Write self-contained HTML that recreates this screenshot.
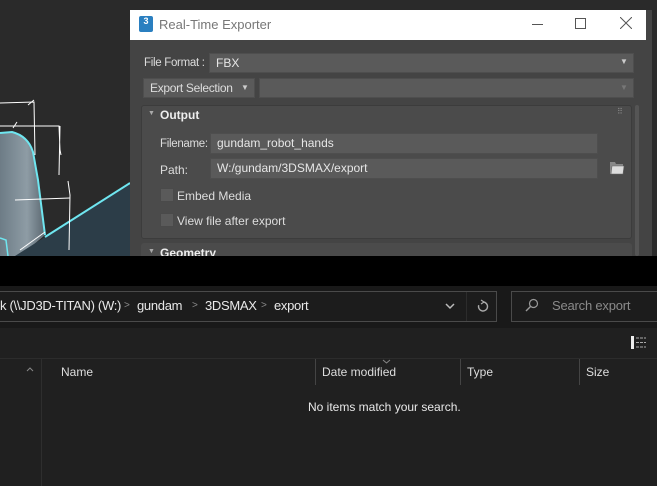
<!DOCTYPE html>
<html><head><meta charset="utf-8"><style>
*{margin:0;padding:0;box-sizing:border-box}
body{width:657px;height:486px;overflow:hidden;background:#191919;font-family:"Liberation Sans",sans-serif;position:relative}
.a{position:absolute}
.t{font-size:12px;color:#ddd;white-space:nowrap}
.inp{background:#5a5a5a;border:1px solid #4e4e4e;color:#e6e6e6;font-size:12px;padding-left:6px;line-height:18px}
.cb{width:14px;height:14px;background:#5a5a5a;border:1px solid #4a4a4a}
.bc{font-size:13px;color:#e8e8e8;top:298px;letter-spacing:-0.3px}
.sep{font-size:10px;color:#888;top:300px}
</style></head><body>
<div class="a" style="left:0;top:0;width:657px;height:256px;background:#2a2a2a"></div>
<svg class="a" style="left:0;top:0" width="135" height="256">
<defs><linearGradient id="g" x1="0" x2="1"><stop offset="0" stop-color="#6d7c86"/><stop offset=".6" stop-color="#8e9ca5"/><stop offset="1" stop-color="#5a6770"/></linearGradient></defs>
<path d="M0 133 L12 132 Q28 136 33 152 L38 180 L45 235 L20 256 L0 256Z" fill="url(#g)"/>
<path d="M45 237 L130 183 L130 256 L15 256Z" fill="#2c3d48"/>
<path d="M0 133 L12 132 Q28 136 33 152 L38 180 L45 235" stroke="#6fe6f0" stroke-width="2" fill="none"/>
<path d="M45 237 L130 183" stroke="#6fe6f0" stroke-width="2"/>
<path d="M0 238 L6 240 L8 256" stroke="#6fe6f0" stroke-width="1.5" fill="none"/>
<g stroke="#fff" stroke-width="1" fill="none">
<path d="M0 103 L34 102 L35 155"/><path d="M28 105 L34 100"/><path d="M13 128 L17 122"/>
<path d="M0 126 L59 126 L60 150 L61 155 M60 126 L59 175"/>
<path d="M68 181 L70 195 L69 250"/><path d="M15 200 L70 198"/><path d="M20 250 L45 232"/>
</g></svg>
<div class="a" style="left:130px;top:10px;width:522px;height:246px;background:#444"></div>
<div class="a" style="left:130px;top:10px;width:516px;height:30px;background:#fff"></div>
<div class="a" style="left:139px;top:16px;width:14px;height:16px;background:#2a7fc0;border-radius:2px;color:#fff;font-size:9px;font-weight:bold;text-align:center;line-height:11px">3</div>
<div class="a t" style="left:159px;top:17px;color:#777;font-size:13px">Real-Time Exporter</div>
<div class="a" style="left:532px;top:24px;width:11px;height:1px;background:#555"></div>
<div class="a" style="left:575px;top:18px;width:11px;height:11px;border:1px solid #555"></div>
<svg class="a" style="left:620px;top:17px" width="12" height="12"><path d="M0 0L12 12M12 0L0 12" stroke="#555"/></svg>
<div class="a t" style="left:144px;top:57px;font-size:11.5px;letter-spacing:-0.3px;z-index:2">File Format :</div>
<div class="a inp" style="left:209px;top:53px;width:425px;height:20px">FBX</div>
<div class="a t" style="left:620px;top:57px;font-size:8px;color:#ccc">▼</div>
<div class="a inp" style="left:143px;top:78px;width:112px;height:20px;color:#ddd;letter-spacing:-0.3px">Export Selection</div>
<div class="a t" style="left:241px;top:83px;font-size:8px;color:#ccc">▼</div>
<div class="a inp" style="left:259px;top:78px;width:375px;height:20px"></div>
<div class="a t" style="left:620px;top:83px;font-size:8px;color:#777">▼</div>
<div class="a" style="left:141px;top:105px;width:491px;height:134px;background:#4b4b4b;border:1px solid #3c3c3c;border-radius:3px"></div>
<div class="a t" style="left:148px;top:110px;font-size:7px;color:#aaa">▼</div>
<div class="a t" style="left:160px;top:108px;font-weight:bold;font-size:12px;color:#eee">Output</div>
<div class="a t" style="left:617px;top:107px;font-size:8px;color:#888">⠿</div>
<div class="a t" style="left:160px;top:138px;font-size:11.5px;letter-spacing:-0.3px;z-index:2">Filename:</div>
<div class="a inp" style="left:210px;top:133px;width:388px;height:21px">gundam_robot_hands</div>
<div class="a t" style="left:160px;top:163px">Path:</div>
<div class="a inp" style="left:210px;top:158px;width:388px;height:21px">W:/gundam/3DSMAX/export</div>
<svg class="a" style="left:609px;top:161px" width="16" height="14"><path d="M1 1h5l1 2h7v10H1z" fill="#888"/><path d="M3 5h12l-1 8H2z" fill="#ddd" stroke="#666" stroke-width=".6"/></svg>
<div class="a cb" style="left:160px;top:188px"></div>
<div class="a t" style="left:177px;top:189px">Embed Media</div>
<div class="a cb" style="left:160px;top:213px"></div>
<div class="a t" style="left:177px;top:214px">View file after export</div>
<div class="a" style="left:141px;top:243px;width:491px;height:20px;background:#4b4b4b;border-radius:3px"></div>
<div class="a t" style="left:148px;top:248px;font-size:7px;color:#aaa">▼</div>
<div class="a t" style="left:160px;top:246px;font-weight:bold;color:#eee">Geometry</div>
<div class="a" style="left:635px;top:105px;width:4px;height:151px;background:#555;border-radius:2px"></div>
<div class="a" style="left:0;top:256px;width:657px;height:30px;background:#000"></div>
<div class="a" style="left:0;top:286px;width:657px;height:42px;background:#191919"></div>
<div class="a" style="left:-2px;top:291px;width:499px;height:31px;border:1px solid #4a4a4a;background:#1c1c1c"></div>
<div class="a" style="left:466px;top:292px;width:1px;height:29px;background:#2c2c2c"></div>
<div class="a t bc" style="left:0">k (\\JD3D-TITAN) (W:)</div>
<div class="a t sep" style="left:124px">&gt;</div>
<div class="a t bc" style="left:137px">gundam</div>
<div class="a t sep" style="left:192px">&gt;</div>
<div class="a t bc" style="left:205px">3DSMAX</div>
<div class="a t sep" style="left:261px">&gt;</div>
<div class="a t bc" style="left:274px">export</div>
<svg class="a" style="left:445px;top:302px" width="10" height="8"><path d="M1 2l4 4 4-4" stroke="#bbb" stroke-width="1.5" fill="none"/></svg>
<svg class="a" style="left:477px;top:299px" width="12" height="14"><path d="M6 3a4.5 4.5 0 1 1-4.3 3.2" stroke="#aaa" stroke-width="1.4" fill="none"/><path d="M4 1l3 2-3 2" stroke="#aaa" stroke-width="1.2" fill="none"/></svg>
<div class="a" style="left:511px;top:291px;width:150px;height:31px;border:1px solid #4a4a4a;background:#1c1c1c"></div>
<svg class="a" style="left:525px;top:298px" width="14" height="14"><circle cx="8.5" cy="5.5" r="4" stroke="#999" fill="none" stroke-width="1.2"/><path d="M5.5 8.5L1 13" stroke="#999" stroke-width="1.4"/></svg>
<div class="a t" style="left:552px;top:298px;font-size:13px;color:#8a8a8a;letter-spacing:-0.2px">Search export</div>
<div class="a" style="left:0;top:328px;width:657px;height:30px;background:#202020"></div>
<svg class="a" style="left:631px;top:336px" width="16" height="13"><rect x="0" y="0" width="3" height="13" fill="#eee"/><path d="M5 2h10M5 6.5h10M5 11h10" stroke="#aaa" stroke-dasharray="3 1"/></svg>
<div class="a" style="left:0;top:358px;width:657px;height:1px;background:#2c2c2c"></div>
<div class="a" style="left:0;top:359px;width:657px;height:127px;background:#202020"></div>
<div class="a" style="left:41px;top:359px;width:1px;height:127px;background:#2e2e2e"></div>
<svg class="a" style="left:26px;top:366px" width="8" height="6"><path d="M1 5l3-3 3 3" stroke="#888" fill="none"/></svg>
<div class="a t" style="left:61px;top:365px;color:#ddd">Name</div>
<div class="a" style="left:315px;top:359px;width:1px;height:26px;background:#444"></div>
<svg class="a" style="left:382px;top:359px" width="9" height="5"><path d="M1 1l3.5 3 3.5-3" stroke="#888" fill="none"/></svg>
<div class="a t" style="left:322px;top:365px">Date modified</div>
<div class="a" style="left:460px;top:359px;width:1px;height:26px;background:#444"></div>
<div class="a t" style="left:467px;top:365px">Type</div>
<div class="a" style="left:579px;top:359px;width:1px;height:26px;background:#444"></div>
<div class="a t" style="left:586px;top:365px">Size</div>
<div class="a t" style="left:308px;top:400px;color:#e8e8e8">No items match your search.</div>
</body></html>
